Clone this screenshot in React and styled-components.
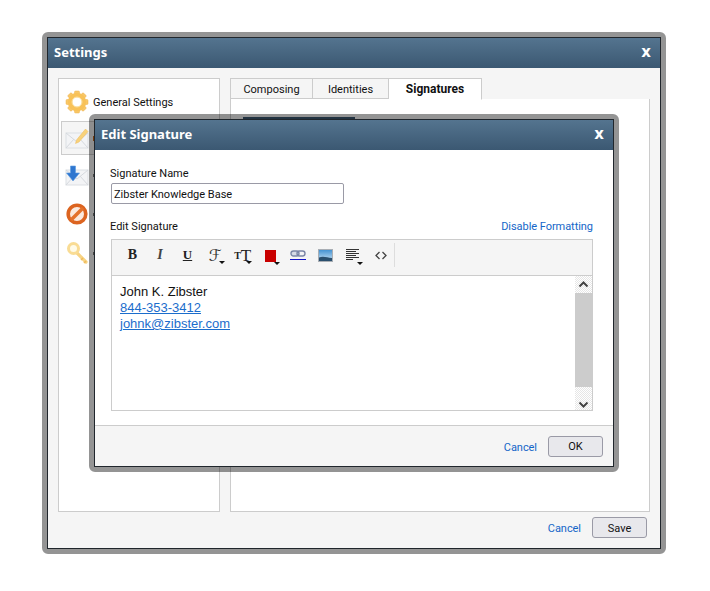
import React from "react"
import styled, { createGlobalStyle } from "styled-components"

const GlobalStyle = createGlobalStyle`
  html, body {
    margin: 0;
    background: #fff;
    font-family: Roboto, "Noto Sans", sans-serif;
    font-size: 11px;
    color: #111;
  }
  * {
    box-sizing: border-box;
  }
`

const Page = styled.div`
  width: 710px;
  height: 591px;
  padding: 32px 0 0 42px;
`

const Frame = styled.div`
  position: relative;
  width: ${(p) => p.$width}px;
  height: ${(p) => p.$height}px;
  border: 5px solid rgba(0, 0, 0, 0.42);
  border-radius: 6px;
  background-clip: padding-box;
`

const ModalFrame = styled(Frame)`
  position: absolute;
  left: 42px;
  top: 77px;
  z-index: 10;
`

const Window = styled.div`
  height: 100%;
  border: 1px solid #20262c;
  background: #f5f5f5;
  display: flex;
  flex-direction: column;
`

const TitleBar = styled.div`
  flex: 0 0 30px;
  display: flex;
  align-items: center;
  justify-content: space-between;
  padding: 0 9px 2px 6px;
  background: linear-gradient(#54748f, #3b5872);
  color: #fff;
  font-family: "Noto Sans", sans-serif;
  font-size: 13px;
  font-weight: 700;
`

const CloseX = styled.span`
  font-family: "DejaVu Sans", sans-serif;
  font-size: 15px;
  font-weight: 700;
  line-height: 1;
`

const SettingsBody = styled.div`
  flex: 1;
  display: flex;
  gap: 10px;
  padding: 10px 10px 0;
`

const Sidebar = styled.div`
  flex: none;
  width: 162px;
  height: 434px;
  background: #fff;
  border: 1px solid #ccc;
  padding: 4px 2px;
  display: flex;
  flex-direction: column;
`

const NavItem = styled.div`
  height: ${(p) => p.$height}px;
  display: flex;
  align-items: center;
  gap: 4px;
  padding-left: 3px;
  border: 1px solid ${(p) => (p.$active ? "#ccc" : "transparent")};
  background: ${(p) => (p.$active ? "#f5f5f5" : "transparent")};
  font-size: 11px;
`

const LabelStub = styled.span`
  width: 2px;
  height: ${(p) => (p.$active ? 5 : 3)}px;
  background: ${(p) => (p.$active ? "#c8661a" : "#777")};
`

const TabArea = styled.div`
  flex: none;
  width: 420px;
  display: flex;
  flex-direction: column;
`

const TabRow = styled.div`
  display: flex;
  align-items: flex-end;
  height: 21px;
`

const Tab = styled.div`
  width: ${(p) => p.$width}px;
  height: ${(p) => (p.$active ? 22 : 21)}px;
  margin-bottom: ${(p) => (p.$active ? -1 : 0)}px;
  padding-top: ${(p) => (p.$active ? 0 : 2)}px;
  display: flex;
  align-items: center;
  justify-content: center;
  position: relative;
  z-index: ${(p) => (p.$active ? 2 : 1)};
  border: 1px solid #ccc;
  border-left-width: ${(p) => (p.$first ? 1 : 0)}px;
  border-bottom-color: ${(p) => (p.$active ? "#fff" : "#ccc")};
  background: ${(p) => (p.$active ? "#fff" : "#f5f5f5")};
  font-size: ${(p) => (p.$active ? 12 : 11)}px;
  font-weight: ${(p) => (p.$active ? 700 : 400)};
`

const TabPanel = styled.div`
  height: 413px;
  background: #fff;
  border: 1px solid #ccc;
  border-top: 0;
  padding: 18px 12px;
`

const HiddenHeader = styled.div`
  width: 112px;
  height: 20px;
  background: #3b5872;
`

const Footer = styled.div`
  display: flex;
  align-items: center;
  justify-content: flex-end;
  gap: 11px;
`

const SettingsFooter = styled(Footer)`
  padding: 5px 3px 0 0;
`

const ModalFooter = styled(Footer)`
  flex: 1;
  border-top: 1px solid #ccc;
  padding-right: 10px;
`

const TextLink = styled.a`
  color: #1466c8;
  font-size: 11px;
  letter-spacing: -0.05px;
`

const FooterLink = styled(TextLink)`
  padding-top: 2px;
`

const Button = styled.button`
  width: 55px;
  height: 21px;
  padding: 1px 0 0;
  border: 1px solid #9a9aa6;
  border-radius: 3px;
  background: #e8e8ec;
  color: #111;
  font: inherit;
`

const ModalBody = styled.div`
  flex: 0 0 275px;
  background: #fff;
  padding: 15px 20px 0 15px;
`

const FieldLabel = styled.div`
  height: 15px;
  line-height: 17px;
`

const NameInput = styled.div`
  width: 233px;
  height: 21px;
  margin: 3px 0 14px 1px;
  padding-left: 2px;
  border: 1px solid #9a9aa6;
  border-radius: 2px;
  line-height: 21px;
`

const LabelRow = styled.div`
  display: flex;
  justify-content: space-between;
  height: 15px;
  line-height: 17px;
  margin-bottom: 6px;
`

const Editor = styled.div`
  margin-left: 1px;
  width: 482px;
  border: 1px solid #ccc;
`

const Toolbar = styled.div`
  height: 36px;
  background: #f5f5f5;
  border-bottom: 1px solid #ccc;
  padding: 3px 0 0 6.5px;
  display: flex;
`

const ToolGroup = styled.div`
  display: flex;
  align-items: center;
  height: 24px;
  border-right: 1px solid #ddd;
`

const Tool = styled.div`
  position: relative;
  width: 27.6px;
  height: 24px;
  display: flex;
  align-items: center;
  justify-content: center;
  color: #222;
`

const Caret = styled.i`
  position: absolute;
  right: ${(p) => p.$right}px;
  bottom: ${(p) => p.$bottom || 3}px;
  border: 3px solid transparent;
  border-top: 3px solid #111;
  border-bottom: 0;
`

const GlyphB = styled.b`
  font-family: "Liberation Serif", serif;
  font-size: 14px;
`

const GlyphI = styled.i`
  font-family: "Liberation Serif", serif;
  font-size: 14px;
  font-weight: 700;
  color: #444;
`

const GlyphU = styled.b`
  font-family: "Liberation Serif", serif;
  font-size: 13px;
  text-decoration: underline;
`

const GlyphF = styled.span`
  font-family: "DejaVu Sans", serif;
  font-size: 16px;
  color: #333;
`

const SmallT = styled.span`
  font-family: "Liberation Serif", serif;
  font-size: 10px;
  font-weight: 700;
  line-height: 1;
  align-self: flex-end;
  margin-bottom: 6px;
`

const BigT = styled.span`
  font-family: "Liberation Serif", serif;
  font-size: 17px;
  line-height: 1;
`

const Swatch = styled.div`
  width: 11px;
  height: 12px;
  margin-top: 1px;
  background: #c90000;
`

const EditArea = styled.div`
  position: relative;
  height: 134px;
  background: #fff;
  padding: 8px 8px 0;
  font-family: "Liberation Sans", sans-serif;
  font-size: 13px;
  line-height: 16px;
  color: #111;
`

const EditLink = styled.a`
  display: block;
  color: #1b6dcc;
  text-decoration: underline;
`

const Scrollbar = styled.div`
  position: absolute;
  top: 0;
  right: 0;
  width: 17px;
  height: 100%;
  display: flex;
  flex-direction: column;
  background: repeating-conic-gradient(#e6e6e6 0 25%, #fff 0 50%) 0 0 / 2px 2px;
`

const ScrollButton = styled.div`
  flex: 0 0 17px;
  display: flex;
  align-items: center;
  justify-content: center;
`

const ScrollThumb = styled.div`
  flex: 0 0 94px;
  background: #ccc;
`

const ScrollRest = styled.div`
  flex: 1;
  display: flex;
  align-items: flex-end;
  justify-content: center;
  padding-bottom: 2px;
`

const GearIcon = () => (
  <svg width="24" height="24" viewBox="0 0 24 24">
    <g fill="#f8c768" stroke="#eeb04a" strokeWidth="0.5">
      {[0, 45, 90, 135, 180, 225, 270, 315].map((a) => (
        <rect key={a} x="9.5" y="1" width="5" height="5" rx="1" transform={`rotate(${a} 12 12)`} />
      ))}
    </g>
    <circle cx="12" cy="12" r="7" fill="#fff" stroke="#f8c259" strokeWidth="4.4" />
    <circle cx="12" cy="12" r="5" fill="none" stroke="#fcdf9c" strokeWidth="1" />
  </svg>
)

const Envelope = () => (
  <>
    <rect x="1" y="7" width="22" height="15" fill="#f3f4f6" stroke="#dcdfe3" />
    <path d="M1 7l11 9 11-9M1 22l8-9M23 22l-8-9" fill="none" stroke="#d6d9de" />
  </>
)

const MailPencilIcon = () => (
  <svg width="24" height="24" viewBox="0 0 24 24">
    <Envelope />
    <path d="M10.5 17.5l1-3.5L20.5 3l2.5 2.5-9 10.5z" fill="#f8d27a" stroke="#ecb95a" strokeWidth="0.5" />
  </svg>
)

const MailArrowIcon = () => (
  <svg width="24" height="24" viewBox="0 0 24 24">
    <Envelope />
    <path d="M5.5 3h5v7h4l-6.5 8-6.5-8h4z" fill="#2f76cf" stroke="#5a9be0" strokeWidth="0.6" />
  </svg>
)

const BlockIcon = () => (
  <svg width="24" height="24" viewBox="0 0 24 24">
    <circle cx="12" cy="12" r="8.8" fill="#fbeadf" stroke="#dc6420" strokeWidth="3.6" />
    <path d="M6 18L18 6" stroke="#e4722c" strokeWidth="3.6" />
  </svg>
)

const KeyIcon = () => (
  <svg width="24" height="24" viewBox="0 0 24 24">
    <path d="M11 11l10 10" stroke="#f8d484" strokeWidth="3.2" strokeLinecap="round" />
    <path d="M16 19l2-2M19 22l2-2" stroke="#f0bc5c" strokeWidth="1.6" />
    <circle cx="8.5" cy="7.5" r="5" fill="#fffbe8" stroke="#f9dc94" strokeWidth="3" />
  </svg>
)

const LinkIcon = () => (
  <svg width="16" height="14" viewBox="0 0 16 14">
    <rect x="1" y="3" width="8" height="5" rx="2.5" fill="#d6dbe6" stroke="#7b86a6" strokeWidth="1.4" />
    <rect x="7" y="3" width="8" height="5" rx="2.5" fill="none" stroke="#7b86a6" strokeWidth="1.4" />
    <path d="M0 11.5h16" stroke="#1414c8" strokeWidth="1" />
  </svg>
)

const ImageIcon = () => (
  <svg width="15" height="13" viewBox="0 0 15 13">
    <defs>
      <linearGradient id="sky" x1="0" y1="0" x2="0" y2="1">
        <stop offset="0" stopColor="#3f8fd0" />
        <stop offset="1" stopColor="#cfe6f6" />
      </linearGradient>
    </defs>
    <rect x="0.5" y="0.5" width="14" height="12" fill="url(#sky)" stroke="#a9aeb4" />
    <path d="M1 8.5c4-2 8 0 13 .5v3H1z" fill="#2a4f6e" />
  </svg>
)

const AlignIcon = () => (
  <svg width="14" height="13" viewBox="0 0 14 13">
    <path d="M0 .5h13M0 2.5h10M0 4.5h13M0 6.5h10M0 8.5h13M0 10.5h7" stroke="#333" strokeWidth="1" />
  </svg>
)

const CodeIcon = () => (
  <svg width="12" height="9" viewBox="0 0 12 9">
    <path d="M4.5 1L1 4.5 4.5 8M7.5 1L11 4.5 7.5 8" fill="none" stroke="#444" strokeWidth="1.3" />
  </svg>
)

const Chevron = ({ up }) => (
  <svg width="11" height="7" viewBox="0 0 11 7">
    <path d={up ? "M1.5 5.5l4-4 4 4" : "M1.5 1.5l4 4 4-4"} fill="none" stroke="#444" strokeWidth="2" />
  </svg>
)

const navItems = [
  { id: "general", icon: <GearIcon />, label: "General Settings", height: 38 },
  { id: "composing", icon: <MailPencilIcon />, height: 34, active: true },
  { id: "retrieval", icon: <MailArrowIcon />, height: 40 },
  { id: "blocked", icon: <BlockIcon />, height: 38 },
  { id: "security", icon: <KeyIcon />, height: 40 },
]

export default function App() {
  return (
    <Page>
      <GlobalStyle />
      <Frame $width={624} $height={522}>
        <Window>
          <TitleBar>
            Settings
            <CloseX>x</CloseX>
          </TitleBar>
          <SettingsBody>
            <Sidebar>
              {navItems.map((item) => (
                <NavItem key={item.id} $height={item.height} $active={item.active}>
                  {item.icon}
                  {item.label || <LabelStub $active={item.active} />}
                </NavItem>
              ))}
            </Sidebar>
            <TabArea>
              <TabRow>
                <Tab $width={83} $first>Composing</Tab>
                <Tab $width={76}>Identities</Tab>
                <Tab $width={93} $active>Signatures</Tab>
              </TabRow>
              <TabPanel>
                <HiddenHeader />
              </TabPanel>
              <SettingsFooter>
                <FooterLink>Cancel</FooterLink>
                <Button>Save</Button>
              </SettingsFooter>
            </TabArea>
          </SettingsBody>
        </Window>
        <ModalFrame $width={530} $height={358}>
          <Window>
            <TitleBar>
              Edit Signature
              <CloseX>x</CloseX>
            </TitleBar>
            <ModalBody>
              <FieldLabel>Signature Name</FieldLabel>
              <NameInput>Zibster Knowledge Base</NameInput>
              <LabelRow>
                Edit Signature
                <TextLink>Disable Formatting</TextLink>
              </LabelRow>
              <Editor>
                <Toolbar>
                  <ToolGroup>
                    <Tool><GlyphB>B</GlyphB></Tool>
                    <Tool><GlyphI>I</GlyphI></Tool>
                    <Tool><GlyphU>U</GlyphU></Tool>
                    <Tool><GlyphF>ℱ</GlyphF><Caret $right={4} /></Tool>
                    <Tool><SmallT>T</SmallT><BigT>T</BigT><Caret $right={4} /></Tool>
                    <Tool><Swatch /><Caret $right={4} $bottom={2} /></Tool>
                    <Tool><LinkIcon /></Tool>
                    <Tool><ImageIcon /></Tool>
                    <Tool><AlignIcon /><Caret $right={4} $bottom={2} /></Tool>
                    <Tool><CodeIcon /></Tool>
                  </ToolGroup>
                </Toolbar>
                <EditArea>
                  John K. Zibster
                  <EditLink>844-353-3412</EditLink>
                  <EditLink>johnk@zibster.com</EditLink>
                  <Scrollbar>
                    <ScrollButton><Chevron up /></ScrollButton>
                    <ScrollThumb />
                    <ScrollRest><Chevron /></ScrollRest>
                  </Scrollbar>
                </EditArea>
              </Editor>
            </ModalBody>
            <ModalFooter>
              <FooterLink>Cancel</FooterLink>
              <Button>OK</Button>
            </ModalFooter>
          </Window>
        </ModalFrame>
      </Frame>
    </Page>
  )
}
